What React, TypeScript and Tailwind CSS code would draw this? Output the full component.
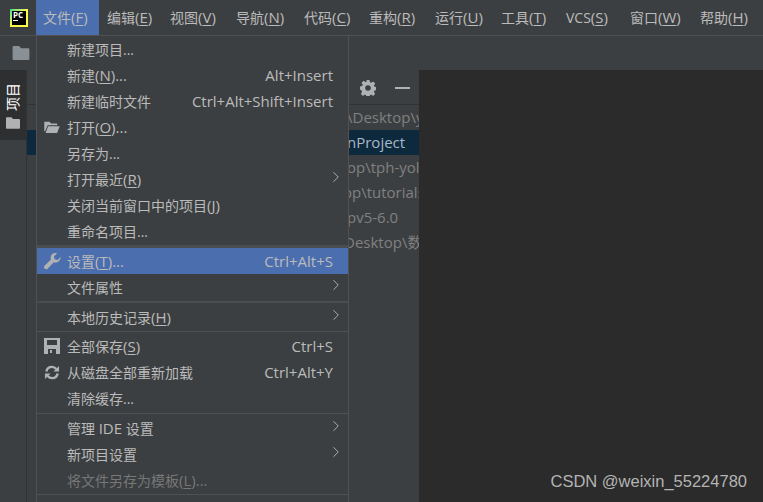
import { ChevronRight } from 'lucide-react';
import type { ReactNode } from 'react';

const font = { fontFamily: '"Open Sans", "Noto Sans CJK SC", sans-serif' };

const menuBar = [
  { label: '文件', key: 'F', width: 'w-[63px] pl-[7px] bg-[#4b6eaf]' },
  { label: '编辑', key: 'E', width: 'w-[63px] pl-[8px]' },
  { label: '视图', key: 'V', width: 'w-[66px] pl-[8px]' },
  { label: '导航', key: 'N', width: 'w-[68px] pl-[8px]' },
  { label: '代码', key: 'C', width: 'w-[65px] pl-[8px]' },
  { label: '重构', key: 'R', width: 'w-[66px] pl-[8px]' },
  { label: '运行', key: 'U', width: 'w-[66px] pl-[8px]' },
  { label: '工具', key: 'T', width: 'w-[65px] pl-[8px]' },
  { label: 'VCS', key: 'S', width: 'w-[64px] pl-[8px]' },
  { label: '窗口', key: 'W', width: 'w-[70px] pl-[8px]' },
  { label: '帮助', key: 'H', width: 'w-[63px] pl-[8px]' },
];

function Mnemonic({ label, k, tail = '' }: { label: string; k: string; tail?: string }) {
  return (
    <span>
      {label}
      <span className="text-[15px]">
        (<span className="underline underline-offset-2">{k}</span>){tail}
      </span>
    </span>
  );
}

function FolderIcon({ className }: { className: string }) {
  return (
    <svg viewBox="0 0 18 15" className={className} fill="currentColor">
      <path d="M0 1.5C0 .7.6 0 1.4 0H7l2 2.500h7.600c.8 0 1.400.6 1.400 1.400v9.700c0 .8-.6 1.400-1.400 1.400H1.400C.6 15 0 14.400 0 13.600z" />
    </svg>
  );
}

function OpenIcon() {
  return (
    <svg viewBox="0 0 18 14" className="h-[12px] w-[18px] text-[#afb1b3]" fill="currentColor">
      <path d="M0 1h6l2 2h7v2H4L1 12H0z" />
      <path d="M4.500 6H18l-3 8H1.500z" />
    </svg>
  );
}

function WrenchIcon() {
  return (
    <svg viewBox="0 0 18 18" className="h-[17px] w-[17px] text-[#afb1b3]" fill="currentColor">
      <path d="M17.600 4.200l-3.300 3.200-3-.7-.8-3L13.800.300C11.600-.4 9.400.2 8.200 1.700 7 3.100 6.700 5 7.300 6.800L.6 13.500c-.8.800-.8 2.200 0 3 .9 1 2.300 1 3.200.1l6.600-6.700c1.900.7 3.900.3 5.400-1.100 1.400-1.400 2.200-3.500 1.800-4.600z" />
    </svg>
  );
}

function SaveIcon() {
  return (
    <svg viewBox="0 0 16 16" className="h-[16px] w-[16px] text-[#afb1b3]" fill="currentColor">
      <path fillRule="evenodd" d="M0 0h16v16H0zM3 2v5h10V2zM4 11v5h8v-5zM6 12h2v3H6z" />
    </svg>
  );
}

function ReloadIcon() {
  return (
    <svg viewBox="0 0 16 16" className="h-[15px] w-[16px] text-[#afb1b3]" fill="none" stroke="currentColor" strokeWidth="2.600">
      <path d="M2 7c.5-3 3-5 6-5 2 0 3.500 1 4.500 2.300" />
      <path d="M14 9c-.5 3-3 5-6 5-2 0-3.500-1-4.500-2.300" />
      <path d="M15.500 1v6h-6z M.5 15V9h6z" fill="currentColor" stroke="none" />
    </svg>
  );
}

function Row({
  icon,
  children,
  shortcut,
  arrow,
  active,
  disabled,
}: {
  icon?: ReactNode;
  children: ReactNode;
  shortcut?: string;
  arrow?: boolean;
  active?: boolean;
  disabled?: boolean;
}) {
  return (
    <div
      className={`flex h-[26px] items-center pr-[15px] ${active ? 'bg-[#4b6eaf]' : ''} ${
        disabled ? 'text-[#777777]' : 'text-[#bbbbbb]'
      }`}
    >
      <div className="flex w-[30px] shrink-0 items-center justify-center">{icon}</div>
      <div className="flex-1">{children}</div>
      {shortcut && <span className="text-[15px]">{shortcut}</span>}
      {arrow && <ChevronRight className="mr-[-12px] mb-[4px] h-[18px] w-[18px] text-[#afb1b3]" strokeWidth={1.300} />}
    </div>
  );
}

function Sep({ extra }: { extra?: boolean }) {
  return <div className={`${extra ? 'mt-[2px]' : 'mt-[1px]'} mb-[1px] h-[1px] bg-[#515151]`} />;
}

const projectRows = [
  { text: '\\Desktop\\y', cls: 'ml-[320px] text-[#808080]' },
  { text: 'nProject', cls: 'ml-[320px] text-[#a9b7c6]' },
  { text: 'op\\tph-yol', cls: 'ml-[320px] text-[#808080]' },
  { text: 'op\\tutorials', cls: 'ml-[316px] text-[#808080]' },
  { text: 'pv5-6.0', cls: 'ml-[320px] text-[#808080]' },
  { text: 'Desktop\\数', cls: 'ml-[317px] text-[#808080]' },
];

export default function App() {
  return (
    <div
      className="relative flex h-[502px] w-[763px] flex-col overflow-hidden bg-[#3c3f41] text-[14px] text-[#bbbbbb]"
      style={font}
    >
      {/* menu bar */}
      <div className="flex h-[36px] shrink-0 items-stretch border-b border-[#515151]">
        <div className="flex w-[36px] items-center justify-center pl-[2px]">
          <div className="flex h-[18px] w-[18px] flex-col bg-linear-to-br from-[#21d789] via-[#fcf84a] to-[#fcf84a] p-[2px]">
            <div className="flex h-full w-full flex-col bg-black px-[1px] text-[8px] leading-[8px] font-bold text-white">
              PC
              <div className="mt-[1px] h-[1px] w-[5px] bg-white" />
            </div>
          </div>
        </div>
        {menuBar.map((m) => (
          <div key={m.key} className={`flex h-[35px] items-center ${m.width}`}>
            <Mnemonic label={m.label} k={m.key} />
          </div>
        ))}
      </div>

      {/* toolbar */}
      <div className="flex h-[34px] shrink-0 items-center pl-[12px]">
        <FolderIcon className="h-[14px] w-[18px] text-[#8a9196]" />
      </div>

      {/* body */}
      <div className="flex min-h-0 flex-1">
        <div className="flex w-[27px] shrink-0 flex-col border-r border-[#323232]">
          <div className="flex h-[70px] flex-col items-center bg-[#2d2f30] pt-[13px]">
            <span className="rotate-180 text-[14px] leading-[14px] text-white [text-orientation:sideways] [writing-mode:vertical-rl]">
              项目
            </span>
            <FolderIcon className="mt-[6px] h-[12px] w-[14px] text-[#afb1b3]" />
          </div>
        </div>

        <div className="flex w-[392px] shrink-0 flex-col">
          <div className="flex h-[35px] items-center justify-end border-b border-[#323232] pt-[1px]">
            <svg viewBox="0 0 16 16" className="mr-[19px] h-[16px] w-[16px] text-[#afb1b3]" fill="currentColor">
              <path
                fillRule="evenodd"
                d="M6.500 0h3l.4 2.200 1.300.6 1.900-1.300 2.100 2.100-1.300 1.900.6 1.300 2.500.4v3l-2.500.4-.6 1.300 1.300 1.900-2.100 2.100-1.900-1.300-1.300.6-.4 2.500h-3l-.4-2.500-1.300-.6-1.900 1.300-2.100-2.100 1.300-1.900-.6-1.300L0 9.500v-3l2.200-.4.600-1.300L1.500 2.900 3.600.8l1.900 1.300 1.300-.6zM8 5.200a2.800 2.800 0 1 0 0 5.600 2.800 2.800 0 0 0 0-5.600z"
              />
            </svg>
            <div className="mr-[9px] h-[2px] w-[15px] bg-[#afb1b3]" />
          </div>
          <div className="flex flex-col">
            {projectRows.map((r, i) => (
              <div key={i} className={`flex h-[25px] items-center overflow-hidden text-[15px] ${i === 1 ? 'bg-[#0d293e]' : ''}`}>
                <div className={`whitespace-nowrap ${r.cls}`}>{r.text}</div>
              </div>
            ))}
          </div>
        </div>

        <div className="flex-1 bg-[#2b2b2b]" />
      </div>

      {/* file menu */}
      <div className="absolute top-[35px] left-[36px] flex h-[480px] w-[313px] flex-col border border-[#515151] bg-[#3c3f41]">
        <Row>新建项目...</Row>
        <Row shortcut="Alt+Insert"><Mnemonic label="新建" k="N" tail="..." /></Row>
        <Row shortcut="Ctrl+Alt+Shift+Insert">新建临时文件</Row>
        <Row icon={<OpenIcon />}><Mnemonic label="打开" k="O" tail="..." /></Row>
        <Row>另存为...</Row>
        <Row arrow><Mnemonic label="打开最近" k="R" /></Row>
        <Row><Mnemonic label="关闭当前窗口中的项目" k="J" /></Row>
        <Row>重命名项目...</Row>
        <div className="mt-[1px] h-[3px] bg-[#4a4c4e]" />
        <Row icon={<WrenchIcon />} shortcut="Ctrl+Alt+S" active><Mnemonic label="设置" k="T" tail="..." /></Row>
        <Row arrow>文件属性</Row>
        <div className="my-[1px] h-[2px] bg-[#4a4c4e]" />
        <Row arrow><Mnemonic label="本地历史记录" k="H" /></Row>
        <Sep />
        <Row icon={<SaveIcon />} shortcut="Ctrl+S"><Mnemonic label="全部保存" k="S" /></Row>
        <Row icon={<ReloadIcon />} shortcut="Ctrl+Alt+Y">从磁盘全部重新加载</Row>
        <Row>清除缓存...</Row>
        <Sep extra />
        <Row arrow>管理 <span className="text-[15px]">IDE</span> 设置</Row>
        <Row arrow>新项目设置</Row>
        <Row disabled><Mnemonic label="将文件另存为模板" k="L" tail="..." /></Row>
        <Sep />
      </div>

      {/* watermark */}
      <div className="absolute right-[16px] bottom-[8px] font-['Liberation_Sans',sans-serif] text-[16.5px] text-[#b4b4b4]">
        CSDN @weixin_55224780
      </div>
    </div>
  );
}
